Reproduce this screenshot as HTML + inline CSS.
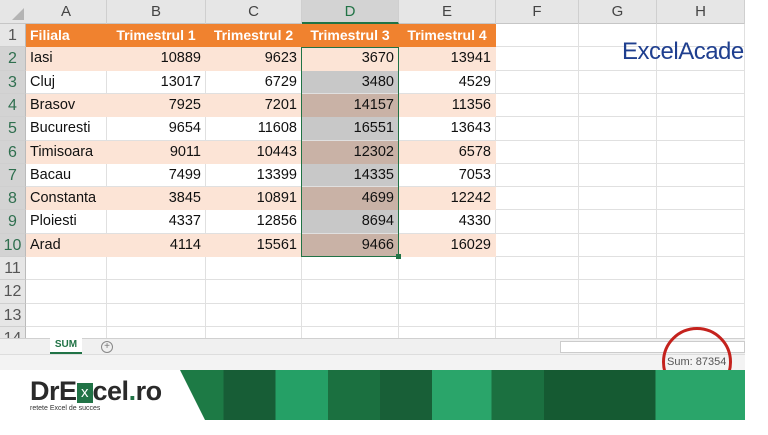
<!DOCTYPE html><html><head><style>
body{margin:0;width:768px;height:435px;overflow:hidden;background:#fff;font-family:"Liberation Sans",sans-serif;position:relative}
.c{position:absolute;box-sizing:border-box;font-size:14.5px;line-height:23px;white-space:nowrap;overflow:hidden}
</style></head><body>
<div id="g"></div>
<script>
const g=document.getElementById('g');
const cols=[0,26,107,206,302,399,496,579,657,745];
const names=['','A','B','C','D','E','F','G','H'];
let h='';
h+=`<div class="c" style="left:0;top:0;width:745px;height:24px;background:#e6e6e6;border-bottom:1px solid #c6c6c6"></div>`;
h+=`<div style="position:absolute;left:12px;top:8px;width:0;height:0;border-left:12px solid transparent;border-bottom:12px solid #b4b4b4"></div>`;
for(let i=1;i<9;i++){h+=`<div class="c" style="left:${cols[i]}px;top:0;width:${cols[i+1]-cols[i]}px;height:24px;text-align:center;color:#444;font-size:15px;border-right:1px solid #cfcfcf;${i==4?'background:#d3d3d3;color:#217346;border-bottom:2px solid #217346;':''}">${names[i]}</div>`}
const data=[['Filiala','Trimestrul 1','Trimestrul 2','Trimestrul 3','Trimestrul 4'],
['Iasi',10889,9623,3670,13941],['Cluj',13017,6729,3480,4529],['Brasov',7925,7201,14157,11356],['Bucuresti',9654,11608,16551,13643],['Timisoara',9011,10443,12302,6578],['Bacau',7499,13399,14335,7053],['Constanta',3845,10891,4699,12242],['Ploiesti',4337,12856,8694,4330],['Arad',4114,15561,9466,16029]];
const rh=23.3;
for(let r=0;r<14;r++){
 const top=Math.round(24+r*rh), ht=Math.round(24+(r+1)*rh)-top;
 h+=`<div class="c" style="left:0;top:${top}px;width:26px;height:${ht}px;background:${r>0&&r<10?'#d3d3d3':'#e6e6e6'};color:#555;font-size:16px;text-align:center;border-bottom:1px solid #cfcfcf;border-right:1px solid #bbb;${r>0&&r<10?'color:#2f6f4f;':''}">${r+1}</div>`;
 for(let c=1;c<9;c++){
  let bg='#fff',txt='',st='color:#111;';
  const inT=r<10&&c<=5;
  if(inT){
   txt=data[r][c-1];
   if(r==0){bg='#f0822f';st='color:#fff;font-weight:bold;text-align:'+(c==1?'left':'center')+';font-size:14px;';}
   else{bg=r%2==1?'#fce4d6':'#fff';st+=c==1?'':'text-align:right;';}
   if(c==4&&r>0){bg=r==1?'#fce4d6':(r%2==1?'#c9b2a6':'#c8c8c8');}
  }
  const band=inT&&(r%2==1||r==0);
  h+=`<div class="c" style="left:${cols[c]}px;top:${top}px;width:${cols[c+1]-cols[c]}px;height:${ht}px;background:${bg};border-right:1px solid ${band?bg:'#e0e0e0'};border-bottom:1px solid ${band?bg:'#e0e0e0'};padding:0 4px;${st}">${txt}</div>`;
 }
}
h+=`<div style="position:absolute;left:301px;top:47px;width:98px;height:210px;border:1px solid #217346;box-sizing:border-box"></div>`;
h+=`<div style="position:absolute;left:396px;top:254px;width:5px;height:5px;background:#217346"></div>`;
g.innerHTML=h;
</script>
<div class="c" style="left:622px;top:36px;font-size:24px;line-height:32px;color:#1f3f8f;letter-spacing:-0.5px">ExcelAcade</div>
<div style="position:absolute;left:0;top:338px;width:745px;height:16px;background:#f0f0f0;border-top:1px solid #d0d0d0"></div>
<div style="position:absolute;left:50px;top:337px;width:32px;height:17px;background:#fff;border-bottom:2px solid #217346;box-sizing:border-box;color:#217346;font-weight:bold;font-size:10px;text-align:center;line-height:15px">SUM</div>
<div style="position:absolute;left:101px;top:341px;width:10px;height:10px;border:1px solid #888;border-radius:50%;font-size:10px;line-height:10px;text-align:center;color:#777">+</div>
<div style="position:absolute;left:560px;top:341px;width:185px;height:12px;background:#fff;border:1px solid #ccc;box-sizing:border-box"></div>
<div style="position:absolute;left:0;top:354px;width:745px;height:16px;background:#f3f3f3;border-top:1px solid #ddd"></div>
<div class="c" style="left:667px;top:355px;font-size:11px;line-height:14px;color:#555">Sum: 87354</div>
<div style="position:absolute;left:662px;top:327px;width:70px;height:70px;border:3px solid #c4221d;border-radius:50%;box-sizing:border-box"></div>
<div style="position:absolute;left:0;top:370px;width:745px;height:50px;background:linear-gradient(90deg,#1b6a3c 0 15%,#2aa56a 15% 22%,#1d7a45 22% 30%,#175d36 30% 37%,#25a066 37% 44%,#1b7040 44% 51%,#185f37 51% 58%,#2aa56a 58% 66%,#1b7040 66% 73%,#155a32 73% 88%,#2aa56a 88%)"></div>
<div style="position:absolute;left:0;top:370px;width:205px;height:50px;background:#fff;clip-path:polygon(0 0,180px 0,205px 50px,0 50px)"></div>
<div class="c" style="left:30px;top:374px;font-size:27px;line-height:34px;font-weight:bold;color:#2a2a2a;letter-spacing:-0.5px">DrE<span style="display:inline-block;background:#217346;color:#fff;font-size:15px;line-height:20px;width:16px;text-align:center;vertical-align:3px;font-weight:normal">x</span>cel<span style="color:#217346">.</span>ro</div>
<div class="c" style="left:30px;top:404px;font-size:7px;line-height:10px;color:#333">retete Excel de succes</div>
</body></html>
